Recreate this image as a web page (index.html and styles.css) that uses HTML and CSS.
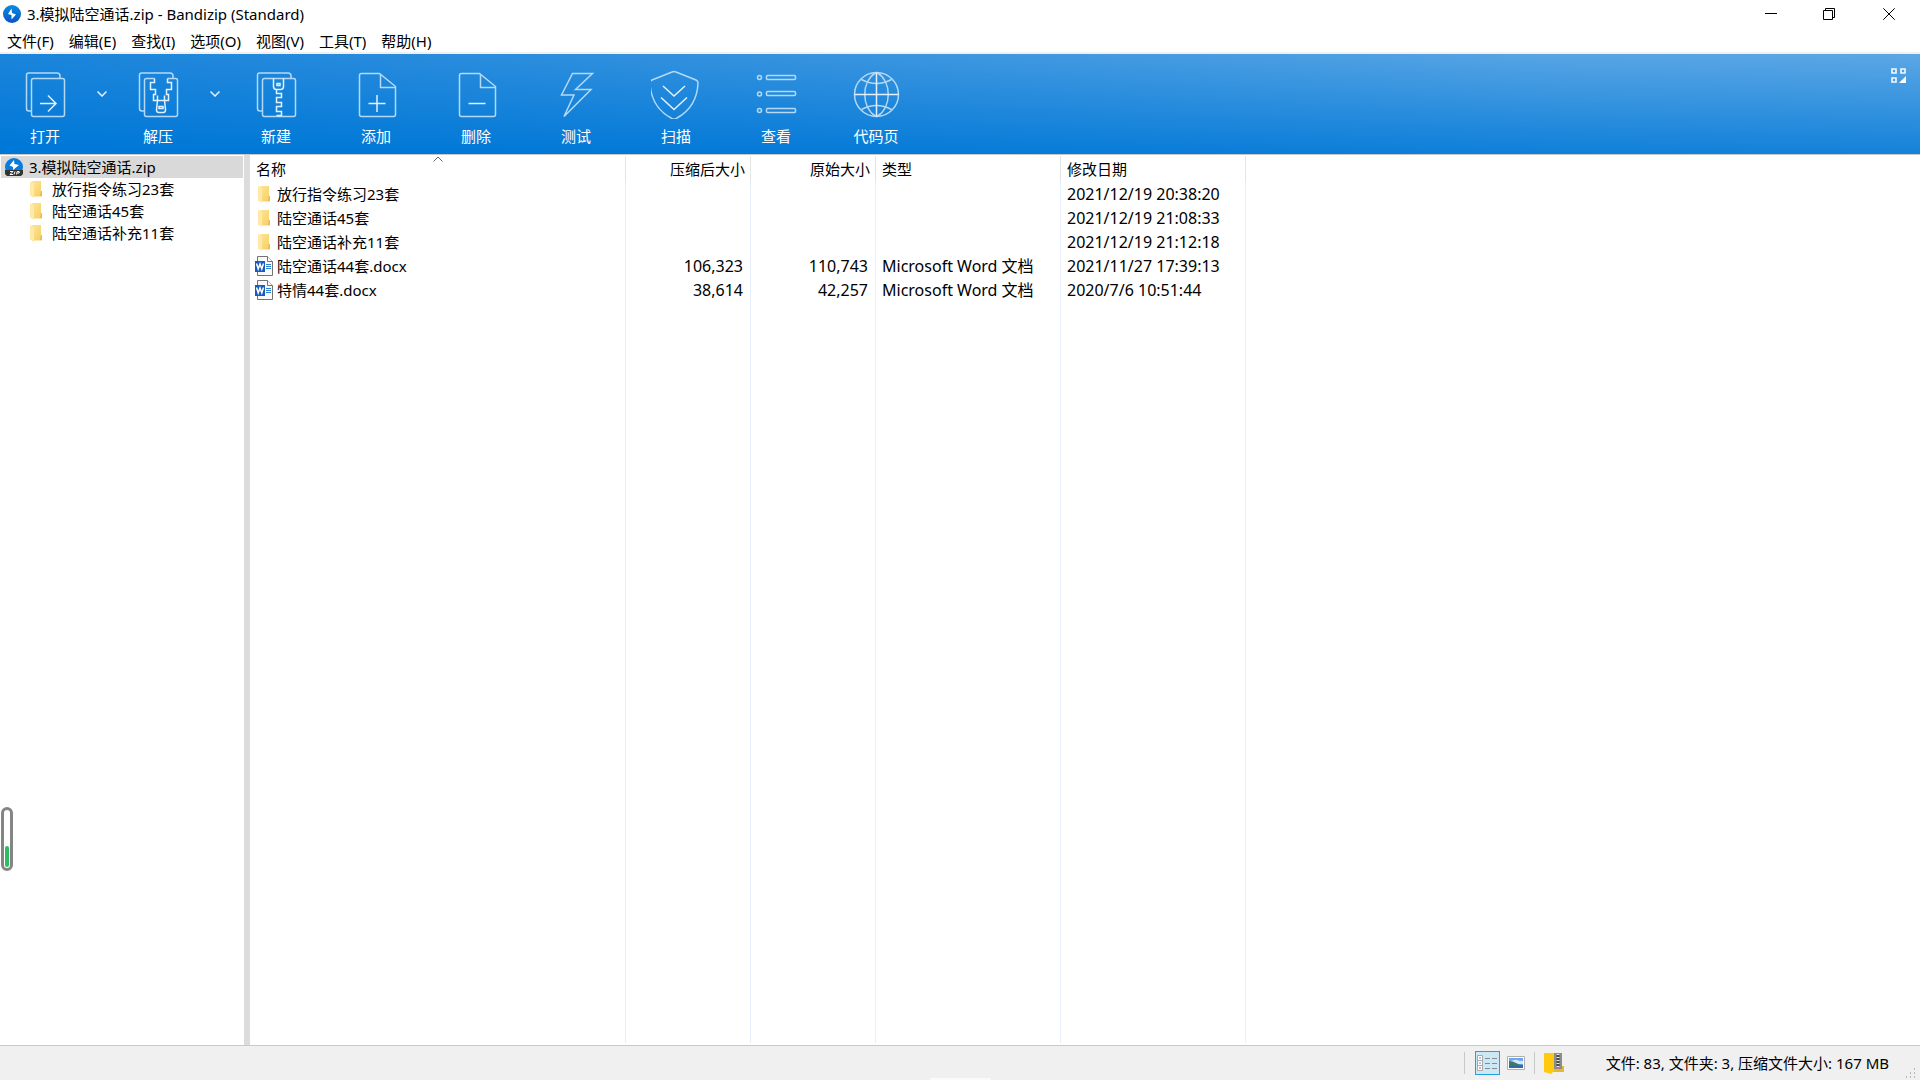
FILE: index.html
```
<!DOCTYPE html>
<html lang="zh-CN">
<head>
    <meta charset="UTF-8">
    <meta name="viewport" content="width=device-width, initial-scale=1.0">
    <title>3.模拟陆空通话.zip - Bandizip (Standard)</title>
    <link rel="stylesheet" href="styles.css">
</head>
<body>
    <!-- Shared icons -->
    <svg class="defs" width="0" height="0" aria-hidden="true">
        <defs>
            <linearGradient id="blue" x1="0" y1="0" x2="0" y2="1">
                <stop offset="0" stop-color="#0a8be0"/>
                <stop offset="1" stop-color="#0a55c4"/>
            </linearGradient>
            <linearGradient id="yellow" x1="0" y1="0" x2="1" y2="1">
                <stop offset="0" stop-color="#ffe596"/>
                <stop offset="1" stop-color="#f5ce62"/>
            </linearGradient>
            <symbol id="folder" viewBox="0 0 12 17">
                <path d="M2 0h9v10h1v5.500H2z" fill="url(#yellow)"/>
                <path d="M0 0l4 2.500V17L0 14.500z" fill="#ffe9a8"/>
                <path d="M11 10h1v5h-2z" fill="#e9bc50"/>
            </symbol>
            <symbol id="word" viewBox="0 0 18 20">
                <path d="M2.500.5h10l5 5v14h-15z" fill="#fafafa" stroke="#737373"/>
                <path d="M12.500.5v5h5" fill="#fff" stroke="#737373"/>
                <path d="M11 8.500h5M11 10.500h5M11 12.500h5" stroke="#2b7cd3"/>
                <rect y="5" width="10" height="11" fill="#185abd"/>
                <path d="M1.500 7.500l1.700 5.500L5 8l1.800 5 1.700-5.500" fill="none" stroke="#fff" stroke-width="1.500"/>
            </symbol>
        </defs>
    </svg>

    <div class="window">
        <header class="titlebar">
            <svg class="app-icon" width="18" height="18" viewBox="0 0 18 18">
                <circle cx="9" cy="9" r="9" fill="url(#blue)"/>
                <path d="M8.500 3.500L5 9l3.500 1v4.500L13 9.500 9 8z" fill="#fff"/>
            </svg>
            <h1>3.模拟陆空通话.zip - Bandizip (Standard)</h1>
            <div class="window-buttons">
                <button aria-label="最小化"><svg width="12" height="12"><path d="M0 5.500h12"/></svg></button>
                <button aria-label="还原"><svg width="12" height="12"><path d="M.5 2.500h9v9h-9zM2.500 2.500v-2h9v9h-2"/></svg></button>
                <button aria-label="关闭"><svg width="12" height="12"><path d="M.3.3l11.400 11.400M11.700.3L.3 11.700"/></svg></button>
            </div>
        </header>

        <nav class="menu">
            <button>文件(F)</button>
            <button>编辑(E)</button>
            <button>查找(I)</button>
            <button>选项(O)</button>
            <button>视图(V)</button>
            <button>工具(T)</button>
            <button>帮助(H)</button>
        </nav>

        <div class="toolbar">
            <button class="tool narrow">
                <svg width="50" height="50">
                    <path d="M11 42H9q-2.500 0-2.500-2.500V6q0-2 2-2H37q3 0 3 3v2"/>
                    <rect x="11.500" y="9.500" width="33" height="38" rx="2"/>
                    <path class="bright" d="M20 34.500h16M28 26.500l8 8-8 8"/>
                </svg>
                <span>打开</span>
            </button>
            <button class="drop" aria-label="打开选项"><svg width="10" height="6"><path d="M.5.500L5 5 9.500.500"/></svg></button>
            <button class="tool narrow">
                <svg width="50" height="50">
                    <path d="M11 42H9q-2.500 0-2.500-2.500V6q0-2 2-2H37q3 0 3 3v2"/>
                    <path d="M21.500 9.500h-8q-2 0-2 2v34q0 2 2 2h29q2 0 2-2v-34q0-2-2-2h-8"/>
                    <path class="bright" d="M21.500 9.500v4h-4v7h5v5h-2v6h4v-5M34.500 9.500v4h4v7h-5v5h2v6h-4v-5"/>
                    <path class="bright" d="M24.500 31.500h7l1 9q0 3-2 3h-5q-2 0-2-3z"/>
                    <rect class="bright" x="26" y="37.500" width="4" height="2"/>
                </svg>
                <span>解压</span>
            </button>
            <button class="drop" aria-label="解压选项"><svg width="10" height="6"><path d="M.5.500L5 5 9.500.500"/></svg></button>
            <button class="tool">
                <svg width="50" height="50">
                    <path d="M11 42H9q-2.500 0-2.500-2.500V6q0-2 2-2H37q3 0 3 3v2"/>
                    <rect x="11.500" y="9.500" width="33" height="38" rx="2"/>
                    <path class="bright" d="M22.500 9.500v8q0 3 3 3h4q3 0 3-3v-8"/>
                    <rect class="bright" x="26" y="14.500" width="3" height="2"/>
                    <path class="bright" d="M25.500 21v3.500h5v4h-5v5h5v4h-5v5h5v4h-5"/>
                </svg>
                <span>新建</span>
            </button>
            <button class="tool">
                <svg width="50" height="50">
                    <path d="M28.500 4.500h-18q-2 0-2 2v39q0 2 2 2h32q2 0 2-2v-28z"/>
                    <path d="M29.500 5v13.500h15"/>
                    <path class="bright" d="M17.500 34.500h17M26 26v17"/>
                </svg>
                <span>添加</span>
            </button>
            <button class="tool">
                <svg width="50" height="50">
                    <path d="M28.500 4.500h-18q-2 0-2 2v39q0 2 2 2h32q2 0 2-2v-28z"/>
                    <path d="M29.500 5v13.500h15"/>
                    <path class="bright" d="M17.500 34.500h17"/>
                </svg>
                <span>删除</span>
            </button>
            <button class="tool">
                <svg width="50" height="50"><path d="M21.500 4.500h20l-17 16h15.500l-27 27 10-21.500H10.500z"/></svg>
                <span>测试</span>
            </button>
            <button class="tool">
                <svg width="50" height="50">
                    <path d="M21 3q2-1 4 0l20 8q2 1 2 3-1 24-21 35-3 2-6 0-20-11-21-35 0-2 2-3z"/>
                    <path class="bright" d="M12 17l11 10 11-10M10 28.500l13 12 13-12"/>
                </svg>
                <span>扫描</span>
            </button>
            <button class="tool">
                <svg width="50" height="50">
                    <circle cx="8.500" cy="8.500" r="2"/><rect x="15.500" y="6.500" width="29" height="4" rx="1"/>
                    <circle cx="8.500" cy="25" r="2"/><rect x="15.500" y="22.500" width="29" height="4" rx="1"/>
                    <circle cx="8.500" cy="41.500" r="2"/><rect x="15.500" y="39.500" width="29" height="4" rx="1"/>
                </svg>
                <span>查看</span>
            </button>
            <button class="tool">
                <svg width="50" height="50">
                    <circle cx="25.500" cy="25.500" r="22"/>
                    <path d="M10.500 10.500q15 8 30 0M10.500 40.500q15-8 30 0M25 3.500c-15 9-15 35 0 44M26 3.500c15 9 15 35 0 44"/>
                    <path class="bright" d="M3.500 25.500h44M25.500 3.500v44"/>
                </svg>
                <span>代码页</span>
            </button>
            <button class="layout" aria-label="布局">
                <svg width="15" height="15"><path d="M1 1h4v4H1zM10 1h4v4h-4zM1 10h4v4H1z"/><path class="corner" d="M15 8v7H8z"/></svg>
            </button>
        </div>

        <main class="content">
            <ul class="tree">
                <li class="root selected">
                    <svg width="18" height="18">
                        <circle cx="9" cy="9" r="9" fill="#0a7bdc"/>
                        <path d="M9 2L4.500 7.500l3.500 1.500v3L14 7 9.500 6z" fill="#fff"/>
                        <path d="M0 12h18v4l-2 2H2l-2-2z" fill="#333"/>
                        <path d="M5 13.500h3l-3 3h3M10 13.500l-1 3M11.500 16.500l.7-3h2v1.500h-2" fill="none" stroke="#fff"/>
                    </svg>
                    3.模拟陆空通话.zip
                </li>
                <li><svg width="12" height="17"><use href="#folder"/></svg>放行指令练习23套</li>
                <li><svg width="12" height="17"><use href="#folder"/></svg>陆空通话45套</li>
                <li><svg width="12" height="17"><use href="#folder"/></svg>陆空通话补充11套</li>
            </ul>

            <div class="files">
                <table>
                    <colgroup>
                        <col class="col-name">
                        <col class="col-size">
                        <col class="col-size">
                        <col class="col-type">
                        <col class="col-date">
                        <col>
                    </colgroup>
                    <thead>
                        <tr>
                            <th class="sorted">名称<svg width="10" height="6"><path d="M.5 5.500L5 1l4.500 4.500"/></svg></th>
                            <th class="num">压缩后大小</th>
                            <th class="num">原始大小</th>
                            <th>类型</th>
                            <th>修改日期</th>
                            <th></th>
                        </tr>
                    </thead>
                    <tbody>
                        <tr>
                            <td><div class="name"><svg width="18" height="17"><use href="#folder" x="3" width="12" height="17"/></svg>放行指令练习23套</div></td>
                            <td></td><td></td><td></td>
                            <td class="data">2021/12/19 20:38:20</td><td></td>
                        </tr>
                        <tr>
                            <td><div class="name"><svg width="18" height="17"><use href="#folder" x="3" width="12" height="17"/></svg>陆空通话45套</div></td>
                            <td></td><td></td><td></td>
                            <td class="data">2021/12/19 21:08:33</td><td></td>
                        </tr>
                        <tr>
                            <td><div class="name"><svg width="18" height="17"><use href="#folder" x="3" width="12" height="17"/></svg>陆空通话补充11套</div></td>
                            <td></td><td></td><td></td>
                            <td class="data">2021/12/19 21:12:18</td><td></td>
                        </tr>
                        <tr>
                            <td><div class="name"><svg width="18" height="20"><use href="#word"/></svg>陆空通话44套.docx</div></td>
                            <td class="data num">106,323</td><td class="data num">110,743</td><td class="data">Microsoft Word 文档</td>
                            <td class="data">2021/11/27 17:39:13</td><td></td>
                        </tr>
                        <tr>
                            <td><div class="name"><svg width="18" height="20"><use href="#word"/></svg>特情44套.docx</div></td>
                            <td class="data num">38,614</td><td class="data num">42,257</td><td class="data">Microsoft Word 文档</td>
                            <td class="data">2020/7/6 10:51:44</td><td></td>
                        </tr>
                        <tr class="rest"><td></td><td></td><td></td><td></td><td></td><td></td></tr>
                    </tbody>
                </table>
            </div>
        </main>

        <footer class="status">
            <div class="views">
                <button class="view active" aria-label="详细信息">
                    <svg width="20" height="16">
                        <path d="M.5.500h5v15h-5zM.5 5.500h5M.5 10.500h5" fill="#fff" stroke="#a8a8a8"/>
                        <path d="M2 3h2M2 8h2" stroke="#5b8fd0"/><path d="M2 13h2" stroke="#e04a3a"/>
                        <path d="M8 3.500h5M15 3.500h5M8 8.500h5M15 8.500h5M8 13.500h5M15 13.500h5" stroke="#8a8a8a"/>
                    </svg>
                </button>
                <button class="view" aria-label="大图标">
                    <svg width="18" height="14">
                        <path d="M.5.500h17v13H.5z" fill="#fff" stroke="#b0b0b0"/>
                        <path d="M2 2h14v10H2z" fill="#6ea6ea"/>
                        <path d="M2 6q6-3 8-2t6 1v3H2z" fill="#d3e6fa"/>
                        <path d="M2 5q4 0 7 2t7 2v1H2z" fill="#3c7a68"/>
                        <path d="M2 9.500h14V12H2z" fill="#3468ac"/>
                    </svg>
                </button>
            </div>
            <svg class="archive" width="20" height="22">
                <path d="M8 2h9v12h3v6H8z" fill="#eab62c"/>
                <path d="M10 1h8v16h-8z" fill="#8c8c8c"/>
                <path d="M14 2v13" stroke="#4a4a4a" stroke-width="3"/>
                <path d="M14 2v13" stroke="#e8e8e8" stroke-width="3" stroke-dasharray="1 2"/>
                <path d="M0 1h10v18l-3 3-7-2z" fill="#ffc90e"/>
            </svg>
            <p>文件: 83, 文件夹: 3, 压缩文件大小: 167 MB</p>
            <svg class="grip" width="12" height="12"><path d="M9 1h2M5 5h2M9 5h2M1 9h2M5 9h2M9 9h2"/></svg>
        </footer>
    </div>

    <div class="gauge"><div class="gauge-fill"></div></div>
    <div class="screen-handle"></div>
</body>
</html>
```
FILE: styles.css
```
* {
    box-sizing: border-box;
}

body {
    margin: 0;
    background-color: #fff;
    color: #000;
    font-family: "Noto Sans", "Noto Sans CJK SC", sans-serif;
    font-size: 15px;
    line-height: 20px;
}

button {
    margin: 0;
    padding: 0;
    border: none;
    background: none;
    color: inherit;
    font: inherit;
}

svg {
    display: block;
    flex: none;
}

.defs {
    position: absolute;
}

.window {
    display: flex;
    flex-direction: column;
    height: 100vh;
}

/* Title bar */
.titlebar {
    display: flex;
    align-items: center;
    height: 28px;
    padding-left: 3px;
}

.titlebar h1 {
    flex: 1;
    margin: 0 0 0 6px;
    font-size: 15px;
    font-weight: normal;
}

.window-buttons {
    display: flex;
}

.window-buttons button {
    display: flex;
    align-items: center;
    justify-content: center;
    width: 58px;
    height: 28px;
}

.window-buttons button:last-child {
    width: 62px;
}

.window-buttons path {
    fill: none;
    stroke: #000;
}

/* Menu */
.menu {
    display: flex;
    gap: 15px;
    height: 26px;
    padding: 3px 7px 1px;
    border-bottom: 2px solid #f0f0f0;
}

/* Toolbar */
.toolbar {
    display: flex;
    height: 101px;
    border-bottom: 1px solid #c8c8c8;
    background: linear-gradient(181deg, rgba(0, 120, 215, 0), #0078d7 95%), linear-gradient(to right, #2489dc, #5ba7e5 80%);
    color: #fff;
}

.toolbar svg {
    fill: none;
    stroke: #b4d9f6;
    stroke-width: 1.5;
}

.toolbar .bright,
.drop path {
    stroke: #e3f1fc;
}

.tool {
    display: flex;
    flex-direction: column;
    align-items: center;
    gap: 7px;
    width: 100px;
    padding-top: 15px;
}

.narrow {
    width: 90px;
}

.drop {
    width: 23px;
    height: 80px;
    padding-left: 7px;
}

.layout {
    align-self: flex-start;
    margin: 14px 14px 0 auto;
}

.layout path {
    stroke: #f4f9fe;
    stroke-width: 1.6;
}

.layout .corner {
    fill: #fff;
    stroke: none;
}

/* Folder tree */
.content {
    display: flex;
    flex: 1;
    min-height: 0;
}

.tree {
    flex: none;
    width: 250px;
    margin: 0;
    padding: 1px 1px 0;
    border-right: 6px solid #dcdcdc;
    list-style: none;
}

.tree li {
    display: flex;
    align-items: center;
    gap: 10px;
    height: 22px;
    padding-left: 29px;
}

.tree .root {
    gap: 6px;
    padding-left: 4px;
}

.selected {
    background-color: #d9d9d9;
}

/* File list */
.files {
    flex: 1;
    padding: 1px 0 2px;
}

table {
    width: 100%;
    height: 100%;
    border-collapse: separate;
    border-spacing: 0;
    table-layout: fixed;
}

.col-name {
    width: 376px;
}

.col-size {
    width: 125px;
}

.col-type,
.col-date {
    width: 185px;
}

th {
    position: relative;
    height: 26px;
    padding: 0 5px 0 6px;
    border-right: 1px solid #e5e5e5;
    font-weight: normal;
    text-align: left;
}

td {
    height: 24px;
    padding: 0 7px 0 6px;
    border-right: 1px solid #e6f0fc;
    white-space: nowrap;
}

th:last-child,
td:last-child {
    border-right: none;
}

th.num,
td.num {
    text-align: right;
}

.data {
    font-size: 16px;
}

.sorted svg {
    position: absolute;
    top: 0;
    left: calc(50% - 5px);
    fill: none;
    stroke: #666;
}

td:first-child {
    padding-left: 5px;
}

.name {
    display: flex;
    align-items: center;
    gap: 4px;
}

.rest td {
    height: auto;
}

/* Status bar */
.status {
    display: flex;
    align-items: center;
    height: 35px;
    border-top: 1px solid #c8cac8;
    background-color: #f0f0f0;
}

.views {
    display: flex;
    gap: 4px;
    align-items: center;
    height: 22px;
    margin-left: auto;
    padding: 0 5px 0 10px;
    border-left: 1px solid #c8c8c8;
    border-right: 1px solid #c8c8c8;
}

.view {
    display: flex;
    align-items: center;
    justify-content: center;
    width: 25px;
    height: 24px;
}

.view.active {
    border: 1px solid #26a0da;
    background-color: #cbe8f6;
}

.archive {
    margin-left: 9px;
}

.status p {
    margin: 0 16px 0 42px;
}

.grip {
    align-self: flex-end;
    margin-right: 3px;
}

.grip path {
    stroke: #b8b8b8;
    stroke-width: 2;
    stroke-dasharray: 1 1;
}

/* Gauge floating at the left edge of the screen */
.gauge {
    position: absolute;
    top: 807px;
    left: 1px;
    display: flex;
    align-items: flex-end;
    width: 12px;
    height: 64px;
    padding: 1px;
    border: 3px solid #858585;
    border-radius: 6px;
    background-color: #fff;
}

.gauge-fill {
    width: 4px;
    height: 21px;
    border-radius: 2px;
    background-color: #2dbd60;
}

/* Handle at the bottom edge of the screen */
.screen-handle {
    position: absolute;
    bottom: 0;
    left: calc(50% - 30px);
    width: 61px;
    height: 2px;
    background-color: #fafafa;
}
```
